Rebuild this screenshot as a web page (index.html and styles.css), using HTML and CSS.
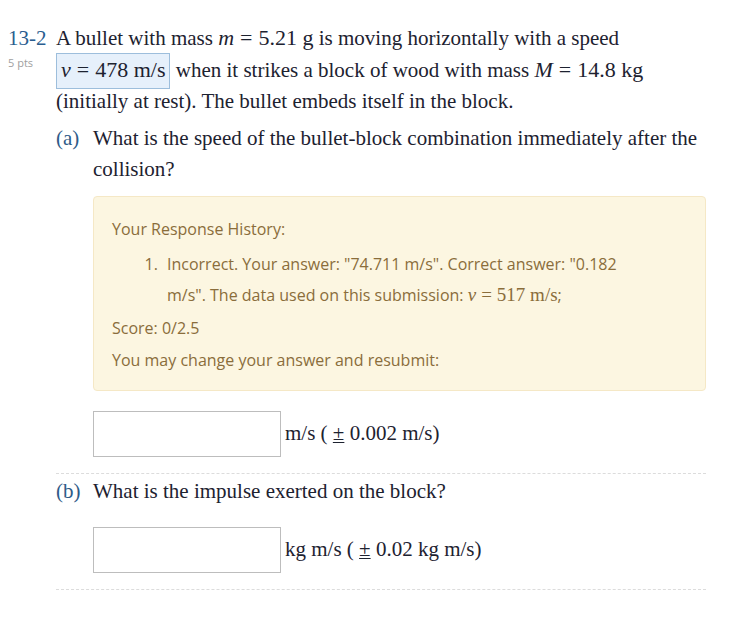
FILE: index.html
```html
<!DOCTYPE html>
<html lang="en">
<head>
    <meta charset="UTF-8">
    <title>13-2</title>
    <link rel="stylesheet" href="styles.css">
</head>
<body>
    <div class="problem">
        <div class="num-col">
            <div class="pnum">13-2</div>
            <div class="pts">5 pts</div>
        </div>
        <div class="qbody">
            <p class="stem">A bullet with mass <span class="math"><i>m</i><span class="op">=</span>5.21 g</span> is moving horizontally with a speed<br><span class="given"><span class="math"><i>v</i><span class="op">=</span>478 m/s</span></span> when it strikes a block of wood with mass <span class="math"><i>M</i><span class="op">=</span>14.8 kg</span><br>(initially at rest). The bullet embeds itself in the block.</p>

            <div class="part">
                <span class="plabel">(a)</span>
                <div class="ptext">What is the speed of the bullet-block combination immediately after the collision?</div>
            </div>

            <div class="response">
                <p class="resp-title">Your Response History:</p>
                <ol class="resp-list">
                    <li>Incorrect. Your answer: "74.711 m/s". Correct answer: "0.182<br>m/s". The data used on this submission: <span class="math"><i>v</i><span class="op">=</span>517 m/s</span>;</li>
                </ol>
                <p class="resp-line">Score: 0/2.5</p>
                <p class="resp-line">You may change your answer and resubmit:</p>
            </div>

            <div class="answer-row">
                <input type="text" class="answer-box">
                <span class="unit">m/s ( <u>±</u> 0.002 m/s)</span>
            </div>
            <div class="divider"></div>

            <div class="part part-b">
                <span class="plabel">(b)</span>
                <div class="ptext">What is the impulse exerted on the block?</div>
            </div>

            <div class="answer-row">
                <input type="text" class="answer-box">
                <span class="unit">kg m/s ( <u>±</u> 0.02 kg m/s)</span>
            </div>
            <div class="divider"></div>
        </div>
    </div>
</body>
</html>
```

FILE: styles.css
```css
body {
    margin: 0;
    padding: 23px 0 0 8px;
    background: #fff;
    font-family: "Liberation Serif", "Times New Roman", serif;
    font-size: 21px;
    line-height: 31.5px;
    color: #1d2230;
}

.problem {
    display: flex;
}

.num-col {
    width: 48px;
    flex-shrink: 0;
}

.pnum {
    color: #2a5d8f;
}

.pts {
    font-family: "Open Sans", "Noto Sans", sans-serif;
    font-size: 11px;
    line-height: 16px;
    color: #a0a0a0;
}

.qbody {
    width: 650px;
}

.stem {
    margin: 0 0 5px 0;
}

.math {
    white-space: nowrap;
    font-size: 22px;
    line-height: 1;
}

.op {
    margin: 0 6px;
}

.given {
    background: #e6f0fb;
    border: 1px solid #9dbedc;
    padding: 4px 4px 6px 4px;
}

/* parts (a), (b) */
.part {
    display: flex;
}

.part-b {
    margin-top: 2px;
}

.plabel {
    width: 37px;
    flex-shrink: 0;
    color: #2f5b88;
}

.ptext {
    flex: 1;
}

/* response history box */
.response {
    margin: 10px 0 0 37px;
    padding: 16px 18px 14px 18px;
    background: #fcf6e1;
    border: 1px solid #f5e8c6;
    border-radius: 4px;
    font-family: "Open Sans", "Noto Sans", sans-serif;
    font-size: 16px;
    line-height: 32px;
    color: #8a6d3b;
}

.response .math {
    font-family: "Liberation Serif", serif;
    font-size: 19px;
}

.response .op {
    margin: 0 5px;
}

.resp-title {
    margin: 0 0 4px 0;
}

.resp-list {
    margin: 0;
    padding-left: 50px;
    line-height: 31.5px;
}

.resp-list li {
    padding-left: 5px;
}

.resp-line {
    margin: 0;
}

/* answers */
.answer-row {
    display: flex;
    align-items: center;
    margin: 20px 0 0 37px;
}

.answer-box {
    width: 188px;
    height: 46px;
    box-sizing: border-box;
    border: 1px solid #bdbdbd;
    margin: 0 4px 0 0;
    padding: 0 8px;
}

.unit {
    font-size: 21px;
}

.unit u {
    text-decoration-thickness: 1px;
    text-underline-offset: 2px;
}

.divider {
    border-top: 1px dashed #dcdcdc;
    margin-top: 16px;
    margin-bottom: 2px;
}
```
